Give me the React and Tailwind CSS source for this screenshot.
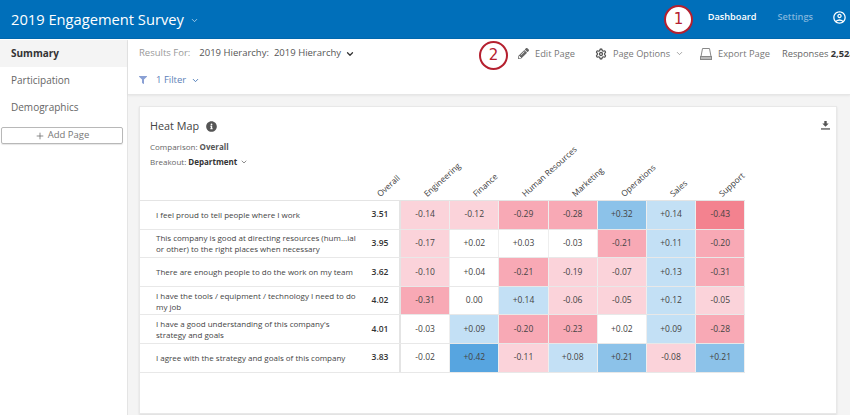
import React from 'react';
import { ChevronDown, Plus, Settings } from 'lucide-react';
import { FaPencilAlt, FaInfoCircle, FaFilter } from 'react-icons/fa';
import { MdOutlineAccountCircle } from 'react-icons/md';

const L1 = 'bg-[#fbd3da]';
const L2 = 'bg-[#f8a9b5]';
const L3 = 'bg-[#f3828f]';
const B1 = 'bg-[#c3e0f5]';
const B2 = 'bg-[#8cc2e9]';
const B3 = 'bg-[#57a5e0]';
const W = 'bg-white';

const departments = ['Engineering', 'Finance', 'Human Resources', 'Marketing', 'Operations', 'Sales', 'Support'];

const rows = [
  {
    label: 'I feel proud to tell people where I work',
    overall: '3.51',
    cells: [['-0.14', L1], ['-0.12', L1], ['-0.29', L2], ['-0.28', L2], ['+0.32', B2], ['+0.14', B1], ['-0.43', L3]],
  },
  {
    label: 'This company is good at directing resources (hum...ial or other) to the right places when necessary',
    overall: '3.95',
    cells: [['-0.17', L1], ['+0.02', W], ['+0.03', W], ['-0.03', W], ['-0.21', L2], ['+0.11', B1], ['-0.20', L2]],
  },
  {
    label: 'There are enough people to do the work on my team',
    overall: '3.62',
    cells: [['-0.10', L1], ['+0.04', W], ['-0.21', L2], ['-0.19', L1], ['-0.07', L1], ['+0.13', B1], ['-0.31', L2]],
  },
  {
    label: 'I have the tools / equipment / technology I need to do my job',
    overall: '4.02',
    cells: [['-0.31', L2], ['0.00', W], ['+0.14', B1], ['-0.06', L1], ['-0.05', L1], ['+0.12', B1], ['-0.05', L1]],
  },
  {
    label: "I have a good understanding of this company's strategy and goals",
    overall: '4.01',
    cells: [['-0.03', W], ['+0.09', B1], ['-0.20', L2], ['-0.23', L2], ['+0.02', W], ['+0.09', B1], ['-0.28', L2]],
  },
  {
    label: 'I agree with the strategy and goals of this company',
    overall: '3.83',
    cells: [['-0.02', W], ['+0.42', B3], ['-0.11', L1], ['+0.08', B1], ['+0.21', B2], ['-0.08', L1], ['+0.21', B2]],
  },
];

function Callout({ n, className }) {
  return (
    <div
      className={`absolute w-[29px] h-[29px] rounded-full bg-white border-[2.500px] border-[#b5202f] flex items-center justify-center font-['DejaVu_Sans',sans-serif] text-[#b5202f] text-[15px] leading-none ${className}`}
    >
      {n}
    </div>
  );
}

function RotatedLabel({ children, className }) {
  return (
    <div className={`relative h-full ${className}`}>
      <span className="absolute left-[28px] bottom-[1px] origin-bottom-left -rotate-[42deg] whitespace-nowrap text-[8.300px] leading-none text-[#404040]">
        {children}
      </span>
    </div>
  );
}

function ExportIcon() {
  return (
    <svg width="12" height="12" viewBox="0 0 12 12" className="shrink-0">
      <path d="M2.500 .5h7l1.500 8H1z" fill="none" stroke="#888" strokeWidth="1" />
      <rect x=".5" y="8.500" width="11" height="3" fill="#bbb" stroke="#888" strokeWidth="1" />
    </svg>
  );
}

function DownloadIcon() {
  return (
    <svg width="9" height="9" viewBox="0 0 9 9">
      <path d="M3.300 0h2.400v2.600h2L4.500 5.700 1.300 2.600h2z" fill="#555" />
      <rect x="0" y="7.300" width="9" height="1.300" fill="#555" />
    </svg>
  );
}

export default function App() {
  return (
    <div className="relative w-[850px] h-[415px] overflow-hidden bg-[#f4f4f4] font-['Open_Sans',sans-serif] text-[#555]">
      {/* Top bar */}
      <header className="h-[39px] bg-[#006fba] flex items-center pl-[11px] pr-[3px] border-b border-[#0067ad]">
        <h1 className="text-[14.700px] text-white leading-none">2019 Engagement Survey</h1>
        <ChevronDown size={9} className="ml-[6px] mt-[2px] text-[#cfe3f3]" />
        <nav className="ml-auto flex items-center text-[9.200px] -mt-[4px]">
          <span className="text-white font-semibold">Dashboard</span>
          <span className="ml-[21px] text-[#7fb4dc] font-semibold">Settings</span>
          <MdOutlineAccountCircle size={15} className="ml-[19px] text-white" />
        </nav>
      </header>
      <Callout n="1" className="left-[664px] top-[5px]" />

      <div className="flex h-[376px] border-t border-white">
        {/* Sidebar */}
        <aside className="w-[128px] shrink-0 bg-white border-r border-[#e4e4e4] text-[10px]">
          <div className="h-[27px] bg-[#f4f4f4] flex items-center pl-[11px] font-bold text-[#333]">Summary</div>
          <div className="h-[27px] flex items-center pl-[11px] text-[#666]">Participation</div>
          <div className="h-[27px] flex items-center pl-[11px] text-[#666]">Demographics</div>
          <button className="mt-[6px] ml-[1px] w-[122px] h-[17px] border border-[#b8b8b8] rounded-[2px] flex items-center justify-center gap-[3px] text-[9.500px] text-[#777] shadow-[0_1px_1px_rgba(0,0,0,0.1)]">
            <Plus size={10} strokeWidth={1.800} className="text-[#666]" />
            Add Page
          </button>
        </aside>

        <main className="flex-1 min-w-0 flex flex-col">
          {/* Toolbar */}
          <div className="h-[55px] shrink-0 bg-white border-b border-[#e6e6e6] pl-[11px] text-[9.500px] whitespace-nowrap shadow-[0_1px_2px_rgba(0,0,0,0.06)]">
            <div className="h-[27px] flex items-center">
              <div className="w-[379px] shrink-0 flex items-center">
                <span className="text-[#999]">Results For:</span>
                <span className="ml-[9px] text-[#555]">2019 Hierarchy:</span>
                <span className="ml-[5px] text-[#555]">2019 Hierarchy</span>
                <ChevronDown size={10} strokeWidth={3} className="ml-[4px] text-[#333]" />
              </div>
              <FaPencilAlt size={11} className="text-[#666] shrink-0" />
              <span className="ml-[6px] text-[#777] text-[9.300px]">Edit Page</span>
              <Settings size={12} strokeWidth={2.600} className="ml-[20px] text-[#555] shrink-0" />
              <span className="ml-[6px] text-[#777] text-[9.200px]">Page Options</span>
              <ChevronDown size={9} className="ml-[5px] text-[#888] shrink-0" />
              <span className="ml-[16px] flex items-center"><ExportIcon /></span>
              <span className="ml-[6px] text-[#777] text-[9.300px]">Export Page</span>
              <span className="ml-[12px] text-[#666] text-[9.300px]">Responses <b className="text-[#333]">2,524</b></span>
            </div>
            <div className="h-[26px] flex items-center text-[#5c7fb8]">
              <FaFilter size={8} className="text-[#8aa0d4]" />
              <span className="ml-[9px]">1 Filter</span>
              <ChevronDown size={9} strokeWidth={2.500} className="ml-[5px] text-[#4a7ab8]" />
            </div>
          </div>

          {/* Heat map card */}
          <div className="flex-1 min-h-0 pl-[11px] pr-[13px] pt-[11px]">
            <section className="h-[308px] bg-white border border-[#e8e8e8] shadow-[0_1px_2px_rgba(0,0,0,0.1)]">
              <div className="flex items-center pl-[10px] pr-[6px] pt-[11px]">
                <h2 className="text-[10.800px] leading-[16px] text-[#444]">Heat Map</h2>
                <FaInfoCircle size={11} className="ml-[7px] text-[#555]" />
                <span className="ml-auto flex -mt-[2px]"><DownloadIcon /></span>
              </div>
              <div className="pl-[10px] mt-[5px] text-[8px] leading-[15px] text-[#666]">
                <div>Comparison: <b className="text-[#555]">Overall</b></div>
                <div className="flex items-center">
                  Breakout:&nbsp;<b className="text-[#333]">Department</b>
                  <ChevronDown size={8} className="ml-[3px] text-[#555]" />
                </div>
              </div>

              {/* Column headings */}
              <div className="flex h-[34px] -mt-[4px]">
                <div className="w-[213px] shrink-0" />
                <RotatedLabel className="w-[47px]">Overall</RotatedLabel>
                {departments.map((d) => (
                  <RotatedLabel key={d} className="w-[49.200px]">{d}</RotatedLabel>
                ))}
              </div>

              {/* Rows */}
              <div className="mt-[1px] w-[605px] border-t border-[#e4e4e4]">
                {rows.map((r) => (
                  <div key={r.overall} className="flex h-[28.600px] border-b border-[#e8e8e8] text-[8.500px]">
                    <div className="w-[221px] shrink-0 pl-[16px] pr-[3px] flex items-center text-[8px] leading-[11px] text-[#444]">
                      {r.label}
                    </div>
                    <div className="w-[40px] shrink-0 flex items-center justify-center font-semibold text-[#333] border-r-2 border-[#e4e4e4]">
                      {r.overall}
                    </div>
                    {r.cells.map(([v, c], i) => (
                      <div key={i} className={`w-[49.200px] shrink-0 flex items-center justify-center text-[#444] border-r border-[#eeeeee] ${c}`}>
                        {v}
                      </div>
                    ))}
                  </div>
                ))}
              </div>
            </section>
          </div>
        </main>
      </div>
      <Callout n="2" className="left-[479px] top-[41px]" />
    </div>
  );
}
